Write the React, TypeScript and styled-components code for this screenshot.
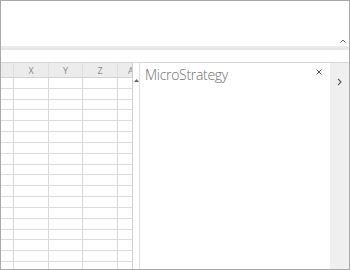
import React from "react";
import styled, { createGlobalStyle } from "styled-components";

const Global = createGlobalStyle`
  html, body { margin: 0; padding: 0; background: #fff; }
  body { font-family: "Open Sans", "Liberation Sans", sans-serif; }
`;

const Frame = styled.div`
  width: 350px;
  height: 270px;
  box-sizing: border-box;
  border: 1px solid #a9a9a9;
  display: flex;
  flex-direction: column;
  overflow: hidden;
  background: #fff;
`;

const Ribbon = styled.div`
  height: 45px;
  flex: none;
  display: flex;
  justify-content: flex-end;
  align-items: flex-end;
  padding: 0 3px 3px 0;
  box-sizing: border-box;
`;

const Separator = styled.div`
  height: 4px;
  flex: none;
  background: linear-gradient(#ededed, #e4e4e4);
`;

const FormulaBar = styled.div`
  height: 12px;
  flex: none;
  border-bottom: 1px solid #d6d6d6;
`;

const Main = styled.div`
  flex: 1;
  display: flex;
  min-height: 0;
`;

const Sheet = styled.div`
  width: 131px;
  flex: none;
  overflow: hidden;
  display: flex;
  flex-direction: column;
`;

const Row = styled.div<{ $header?: boolean }>`
  display: grid;
  grid-template-columns: 13px 35px 34px 35px 14px;
  height: ${(p) => (p.$header ? "15px" : "10.83px")};
  flex: none;
  background: ${(p) => (p.$header ? "#ececec" : "#fff")};
  box-sizing: border-box;
  border-bottom: 1px solid ${(p) => (p.$header ? "#d2d2d2" : "#dcdcdc")};
`;

const Cell = styled.div<{ $header?: boolean; $last?: boolean }>`
  box-sizing: border-box;
  border-right: ${(p) => (p.$last ? "none" : `1px solid ${p.$header ? "#dedede" : "#d8d8d8"}`)};
  font-family: "Open Sans", "Liberation Sans", sans-serif;
  font-size: 9px;
  color: #888;
  display: flex;
  align-items: center;
  justify-content: ${(p) => (p.$last ? "flex-start" : "center")};
  padding-left: ${(p) => (p.$last ? "10px" : "0")};
  overflow: hidden;
  white-space: nowrap;
  line-height: 1;
`;

const Scrollbar = styled.div`
  width: 8px;
  flex: none;
  box-sizing: border-box;
  border-left: 1px solid #cfcfcf;
  border-right: 1px solid #e0e0e0;
  display: flex;
  flex-direction: column;
  align-items: center;
  padding-top: 16px;
`;

const Pane = styled.div`
  flex: 1;
  display: flex;
  justify-content: space-between;
  align-items: flex-start;
  padding: 2px 8px 0 5px;
`;

const Title = styled.div`
  font-family: "Open Sans", "Liberation Sans", sans-serif;
  font-weight: 300;
  font-size: 14px;
  line-height: 20px;
  color: #707070;
  letter-spacing: -0.3px;
`;

const Close = styled.div`
  margin-top: 4px;
  display: flex;
`;

const Strip = styled.div`
  width: 19px;
  flex: none;
  background: #efefef;
  display: flex;
  justify-content: center;
  padding-top: 15px;
  box-sizing: border-box;
`;

const cols = ["X", "Y", "Z", "AA"];

export default function App() {
  const rows = Array.from({ length: 19 });
  return (
    <>
      <Global />
      <Frame>
        <Ribbon>
          <svg width="6" height="4" viewBox="0 0 6 4">
            <path d="M0.5 3.5 L3 1 L5.5 3.5" fill="none" stroke="#666" strokeWidth="1" />
          </svg>
        </Ribbon>
        <Separator />
        <FormulaBar />
        <Main>
          <Sheet>
            <Row $header>
              <Cell $header />
              {cols.map((c, i) => (
                <Cell key={c} $header $last={i === 3}>
                  {c}
                </Cell>
              ))}
            </Row>
            {rows.map((_, r) => (
              <Row key={r}>
                <Cell />
                <Cell />
                <Cell />
                <Cell />
                <Cell $last />
              </Row>
            ))}
          </Sheet>
          <Scrollbar>
            <svg width="5" height="3" viewBox="0 0 5 3">
              <path d="M0 3 L2.5 0 L5 3 Z" fill="#666" />
            </svg>
          </Scrollbar>
          <Pane>
            <Title>MicroStrategy</Title>
            <Close>
              <svg width="6" height="6" viewBox="0 0 6 6">
                <path d="M0.5 0.5 L5.5 5.5 M5.5 0.5 L0.5 5.5" stroke="#555" strokeWidth="1" />
              </svg>
            </Close>
          </Pane>
          <Strip>
            <svg width="5" height="8" viewBox="0 0 5 8">
              <path d="M1 0.8 L4 4 L1 7.2" fill="none" stroke="#555" strokeWidth="1.1" />
            </svg>
          </Strip>
        </Main>
      </Frame>
    </>
  );
}
